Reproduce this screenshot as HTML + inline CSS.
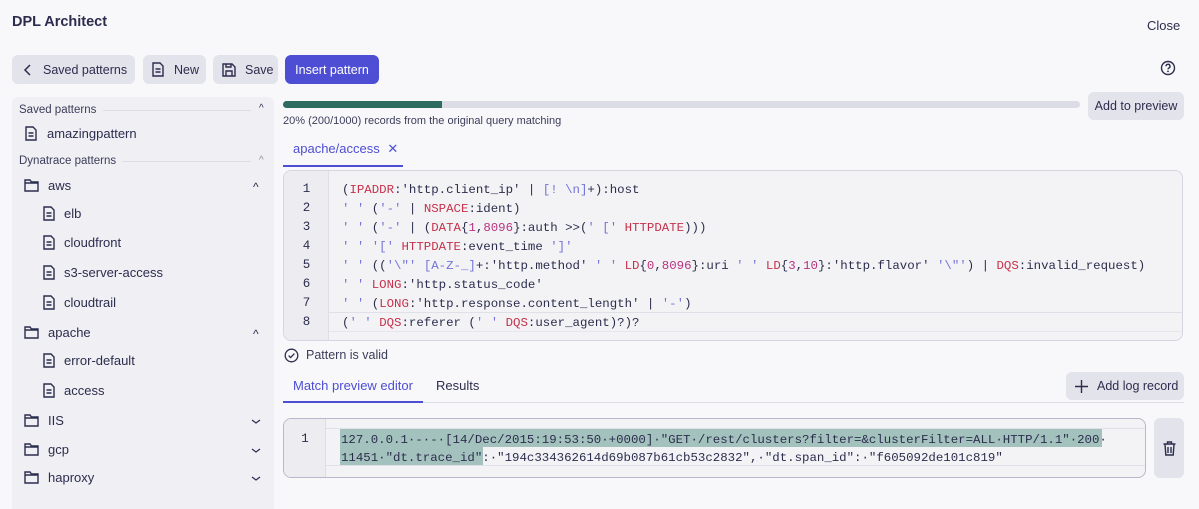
<!DOCTYPE html>
<html><head><meta charset="utf-8"><style>
*{box-sizing:border-box;margin:0;padding:0}
body{width:1199px;height:509px;background:#f8f8fb;font-family:"Liberation Sans",sans-serif;color:#2c2d4d;position:relative;overflow:hidden;font-size:13px}
.a{position:absolute;white-space:nowrap}
.btn{position:absolute;height:29px;border-radius:6px;background:#e3e3ec;display:flex;align-items:center;font-size:12.5px;color:#2c2d4d}
.side{position:absolute;left:12px;top:97px;width:262px;height:412px;background:#efeff4;border-radius:6px 6px 0 0}
.it{position:absolute;display:flex;align-items:center;gap:9px;font-size:13px}
.hdr{position:absolute;font-size:11.5px;color:#3c3d5a}
.chev{position:absolute;font-size:10px;color:#2c2d4d}
.code{font-family:"Liberation Mono",monospace;font-size:12.4px}
.r{color:#c4314b}.p{color:#7373d9}.n{color:#b8327f}
.ln{position:absolute;left:0;width:45px;text-align:center;font-family:"Liberation Mono",monospace;font-size:12.5px;color:#2c2d4d}
</style></head><body>
<div class="a" style="left:12px;top:14px;font-size:14.5px;font-weight:bold">DPL Architect</div>
<div class="a" style="left:1147px;top:18px;font-size:13px">Close</div>
<svg class="a" style="left:1160px;top:60px" width="16" height="16" viewBox="0 0 16 16"><circle cx="8" cy="8" r="6.5" fill="none" stroke="#2c2d4d" stroke-width="1.4"/><path d="M6 6.3a2 2 0 1 1 2.8 1.8c-.6.3-.8.6-.8 1.3" fill="none" stroke="#2c2d4d" stroke-width="1.4"/><circle cx="8" cy="11.4" r=".9" fill="#2c2d4d"/></svg>

<div class="btn" style="left:12px;top:55px;width:123px;padding-left:10px"><svg width="12" height="12" viewBox="0 0 12 12"><path d="M8 1L3 6l5 5" fill="none" stroke="#2c2d4d" stroke-width="1.5"/></svg><span style="margin-left:9px">Saved patterns</span></div>
<div class="btn" style="left:143px;top:55px;width:63px;padding-left:9px"><svg width="12" height="15" viewBox="0 0 12 15"><path d="M1 1h7l3 3v10H1z M3.5 7h5M3.5 10h5" fill="none" stroke="#2c2d4d" stroke-width="1.4"/></svg><span style="margin-left:10px">New</span></div>
<div class="btn" style="left:213px;top:55px;width:65px;padding-left:9px"><svg width="14" height="14" viewBox="0 0 14 14"><path d="M1 1h9l3 3v9H1z M4 1v3h5V1 M4 13V8h6v5" fill="none" stroke="#2c2d4d" stroke-width="1.4"/></svg><span style="margin-left:9px">Save</span></div>
<div class="btn" style="left:285px;top:55px;width:94px;background:#4d4ed4;color:#fff;justify-content:center">Insert pattern</div>

<div class="side"></div>
<div class="hdr" style="left:19px;top:104px">Saved patterns</div>
<div class="a" style="left:103px;top:110px;width:148px;height:1px;background:#dcdce5"></div>
<div class="chev" style="left:259px;top:103px">^</div>
<div class="hdr" style="left:19px;top:155px">Dynatrace patterns</div>
<div class="a" style="left:122px;top:161px;width:129px;height:1px;background:#dcdce5"></div>
<div class="chev" style="left:259px;top:155px;color:#8a8ba0">^</div>

<svg width="0" height="0" style="position:absolute"><defs>
<symbol id="doc" viewBox="0 0 12 15"><path d="M1 1h7l3 3v10H1z M3.5 7h5M3.5 10h5" fill="none" stroke="#2c2d4d" stroke-width="1.4"/></symbol>
<symbol id="fol" viewBox="0 0 15 13"><path d="M1 1h5l1.5 2H14v9H1z M1 4h13" fill="none" stroke="#2c2d4d" stroke-width="1.4"/></symbol>
</defs></svg>

<div class="it" style="left:25px;top:126px"><svg width="12" height="15"><use href="#doc"/></svg><span style="margin-left:1px">amazingpattern</span></div>
<div class="it" style="left:24px;top:178px"><svg width="15" height="13"><use href="#fol"/></svg>aws</div>
<div class="chev" style="left:253px;top:180px;font-size:12px">^</div>
<div class="it" style="left:43px;top:206px"><svg width="12" height="15"><use href="#doc"/></svg>elb</div>
<div class="it" style="left:43px;top:235px"><svg width="12" height="15"><use href="#doc"/></svg>cloudfront</div>
<div class="it" style="left:43px;top:265px"><svg width="12" height="15"><use href="#doc"/></svg>s3-server-access</div>
<div class="it" style="left:43px;top:295px"><svg width="12" height="15"><use href="#doc"/></svg>cloudtrail</div>
<div class="it" style="left:24px;top:325px"><svg width="15" height="13"><use href="#fol"/></svg>apache</div>
<div class="chev" style="left:253px;top:327px;font-size:12px">^</div>
<div class="it" style="left:43px;top:353px"><svg width="12" height="15"><use href="#doc"/></svg>error-default</div>
<div class="it" style="left:43px;top:383px"><svg width="12" height="15"><use href="#doc"/></svg>access</div>
<div class="it" style="left:24px;top:413px"><svg width="15" height="13"><use href="#fol"/></svg>IIS</div>
<div class="it" style="left:24px;top:442px"><svg width="15" height="13"><use href="#fol"/></svg>gcp</div>
<div class="it" style="left:24px;top:470px"><svg width="15" height="13"><use href="#fol"/></svg>haproxy</div>
<svg class="a" style="left:251px;top:418px" width="10" height="70"><path d="M1 2l4 3 4-3M1 31l4 3 4-3M1 59l4 3 4-3" fill="none" stroke="#2c2d4d" stroke-width="1.2"/></svg>

<div class="a" style="left:283px;top:101px;width:797px;height:7px;border-radius:4px;background:#dcdce6"></div>
<div class="a" style="left:283px;top:101px;width:159px;height:7px;border-radius:4px 0 0 4px;background:#2e6b60"></div>
<div class="a" style="left:283px;top:115px;font-size:11px;color:#3c3d5a">20% (200/1000) records from the original query matching</div>
<div class="btn" style="left:1088px;top:92px;width:96px;height:28px;justify-content:center;font-size:12.5px">Add to preview</div>

<div class="a" style="left:293px;top:141px;color:#4d4ed4;font-size:13px">apache/access <span style="margin-left:4px">✕</span></div>
<div class="a" style="left:283px;top:165px;width:120px;height:2px;background:#4d4ed4"></div>

<div class="a" style="left:283px;top:170px;width:900px;height:171px;background:#f3f3f6;border:1px solid #d6d6e0;border-radius:8px;overflow:hidden">
 <div class="a" style="left:0;top:0;width:45px;height:171px;background:#ececf1;border-right:1px solid #dedee6"></div>
 <div class="a" style="left:45px;top:141px;width:860px;height:1px;background:#e0e0e8"></div>
 <div class="a" style="left:45px;top:160px;width:860px;height:1px;background:#e6e6ec"></div>
 <div class="ln" style="top:11px">1</div><div class="ln" style="top:30px">2</div><div class="ln" style="top:49px">3</div><div class="ln" style="top:68px">4</div><div class="ln" style="top:87px">5</div><div class="ln" style="top:106px">6</div><div class="ln" style="top:125px">7</div><div class="ln" style="top:144px">8</div>
 <div class="a code" style="left:58px;top:10px;line-height:19px">(<span class="r">IPADDR</span>:'http.client_ip' | <span class="p">[! \n]</span>+):host<br>
<span class="p">' '</span> (<span class="p">'-'</span> | <span class="r">NSPACE</span>:ident)<br>
<span class="p">' '</span> (<span class="p">'-'</span> | (<span class="r">DATA</span>{<span class="n">1</span>,<span class="n">8096</span>}:auth &gt;&gt;(<span class="p">' ['</span> <span class="r">HTTPDATE</span>)))<br>
<span class="p">' '</span> <span class="p">'['</span> <span class="r">HTTPDATE</span>:event_time <span class="p">']'</span><br>
<span class="p">' '</span> ((<span class="p">'\"'</span> <span class="p">[A-Z-_]</span>+:'http.method' <span class="p">' '</span> <span class="r">LD</span>{<span class="n">0</span>,<span class="n">8096</span>}:uri <span class="p">' '</span> <span class="r">LD</span>{<span class="n">3</span>,<span class="n">10</span>}:'http.flavor' <span class="p">'\"'</span>) | <span class="r">DQS</span>:invalid_request)<br>
<span class="p">' '</span> <span class="r">LONG</span>:'http.status_code'<br>
<span class="p">' '</span> (<span class="r">LONG</span>:'http.response.content_length' | <span class="p">'-'</span>)<br>
(<span class="p">' '</span> <span class="r">DQS</span>:referer (<span class="p">' '</span> <span class="r">DQS</span>:user_agent)?)?</div>
</div>

<svg class="a" style="left:284px;top:348px" width="15" height="15" viewBox="0 0 15 15"><circle cx="7.5" cy="7.5" r="6.3" fill="none" stroke="#2c2d4d" stroke-width="1.3"/><path d="M4.6 7.6l2 2 3.8-4" fill="none" stroke="#2c2d4d" stroke-width="1.3"/></svg>
<div class="a" style="left:306px;top:348px;font-size:12.5px;color:#3c3d5a">Pattern is valid</div>

<div class="a" style="left:293px;top:378px;color:#4d4ed4">Match preview editor</div>
<div class="a" style="left:436px;top:378px">Results</div>
<div class="a" style="left:283px;top:402px;width:901px;height:1px;background:#dedee6"></div>
<div class="a" style="left:283px;top:401px;width:140px;height:2px;background:#4d4ed4"></div>
<div class="btn" style="left:1066px;top:372px;width:118px;height:28px;padding-left:9px;font-size:12.5px"><svg width="13" height="13"><path d="M6.5 0v13M0 6.5h13" stroke="#2c2d4d" stroke-width="1.4"/></svg><span style="margin-left:9px">Add log record</span></div>

<div class="a" style="left:283px;top:418px;width:863px;height:60px;background:#f3f3f6;border:1.5px solid #b8b8c8;border-radius:8px;overflow:hidden">
 <div class="a" style="left:0;top:0;width:42px;height:60px;background:#ececf1;border-right:1px solid #dedee6"></div>
 <div class="a" style="left:42px;top:9px;width:830px;height:1px;background:#e0e0e8"></div>
 <div class="a" style="left:42px;top:46px;width:830px;height:1px;background:#e0e0e8"></div>
 <div class="ln" style="left:0;width:42px;top:13px">1</div>
 <div class="a" style="left:56px;top:10px;width:762px;height:18px;background:#a4c2bd"></div>
 <div class="a" style="left:56px;top:28px;width:143px;height:18px;background:#a4c2bd"></div>
 <div class="a code" style="left:57px;top:12px;line-height:18px;font-size:12.4px">127.0.0.1·-·-·[14/Dec/2015:19:53:50·+0000]·"GET·/rest/clusters?filter=&amp;clusterFilter=ALL·HTTP/1.1"·200·<br>11451·"dt.trace_id":·"194c334362614d69b087b61cb53c2832",·"dt.span_id":·"f605092de101c819"</div>
</div>
<div class="btn" style="left:1154px;top:418px;width:30px;height:60px;justify-content:center"><svg width="13" height="15" viewBox="0 0 13 15"><path d="M0.5 3h12M4.5 3V1h4v2M2 3l.8 11h7.4L11 3M5 6v6M8 6v6" fill="none" stroke="#2c2d4d" stroke-width="1.4"/></svg></div>
</body></html>
